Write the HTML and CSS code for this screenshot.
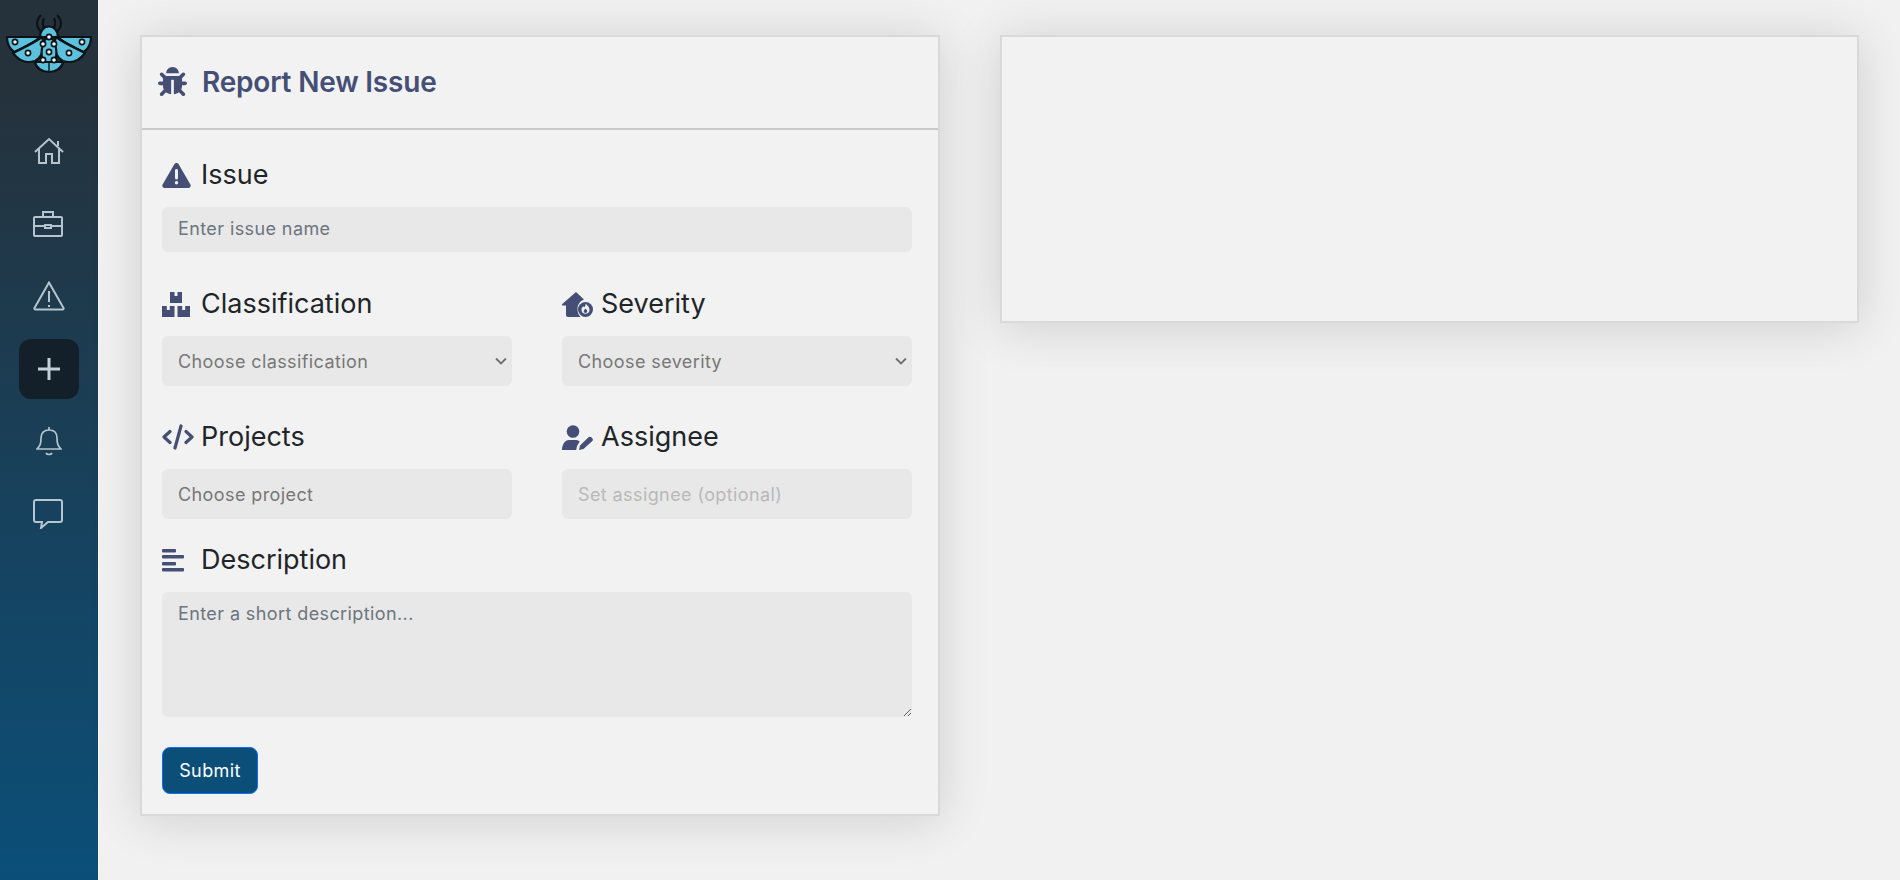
FILE: index.html
```html
<!DOCTYPE html>
<html lang="en">
<head>
    <meta charset="UTF-8">
    <meta name="viewport" content="width=device-width, initial-scale=1.0">
    <title>Report New Issue</title>
    <link rel="stylesheet" href="styles.css">
</head>
<body>
    <div class="sidebar">
        <div class="logo">
            <svg width="98" height="93" viewBox="0 0 98 93" fill="#5cc1dd" stroke="#0c1317" stroke-width="2.2" stroke-linejoin="round">
                <path d="M43 33c-8-5-7-13-2-18M55 33c8-5 7-13 2-18M46 30c-4-4-4-8-2-12M52 30c4-4 4-8 2-12" fill="none"/>
                <path d="M40 37c0-14 18-14 18 0z"/>
                <path d="M7 37h33c-6 6-16 11-26 15-4-3-7-9-7-15z"/>
                <path d="M91 37H58c6 6 16 11 26 15 4-3 7-9 7-15z"/>
                <path d="M35 62h28c-1 6-7 10-14 10s-13-4-14-10z"/>
                <path d="M13 53c10-5 21-10 29-16 3 8 1 20-7 24-9 3-17-1-22-8z"/>
                <path d="M85 53c-10-5-21-10-29-16-3 8-1 20 7 24 9 3 17-1 22-8z"/>
                <path d="M49 36c-7 4-9 16-6 26h12c3-10 1-22-6-26z"/>
                <path d="M49 62v9M16 51l24-13M82 51L58 38" fill="none" stroke-width="1.4"/>
                <g fill="#e8f4f7" stroke-width="1.6">
                    <circle cx="15" cy="42" r="2.6"/>
                    <circle cx="82" cy="42" r="2.6"/>
                    <circle cx="28" cy="53" r="2.6"/>
                    <circle cx="69" cy="53" r="2.6"/>
                    <circle cx="43" cy="44" r="2.6"/>
                    <circle cx="54" cy="44" r="2.6"/>
                    <circle cx="49" cy="37" r="2.6"/>
                    <circle cx="49" cy="52" r="2.6"/>
                    <circle cx="43" cy="60" r="2.6"/>
                    <circle cx="54" cy="60" r="2.6"/>
                </g>
            </svg>
        </div>
        <div class="nav">
            <a class="nav-item" href="#">
                <svg width="30" height="28" viewBox="0 0 30 28" class="nav-icon">
                    <path d="M1 15L15 2l14 13M5 12v14h7v-9h6v9h7V12M24 9V4"/>
                </svg>
            </a>
            <a class="nav-item" href="#">
                <svg width="30" height="26" viewBox="0 0 30 26" class="nav-icon shift-left">
                    <path d="M2 6h26a1 1 0 0 1 1 1v17a1 1 0 0 1-1 1H2a1 1 0 0 1-1-1V7a1 1 0 0 1 1-1zM10 6V1h10v5M1 15h11M18 15h11M12 14h6v3h-6z"/>
                </svg>
            </a>
            <a class="nav-item" href="#">
                <svg width="32" height="30" viewBox="0 0 32 30" class="nav-icon">
                    <path d="M16 1.500L30.500 27a1 1 0 0 1-1 1.500h-27a1 1 0 0 1-1-1.500zM16 10v11M16 24v2"/>
                </svg>
            </a>
            <a class="nav-item active" href="#">
                <svg width="24" height="24" viewBox="0 0 24 24" class="nav-icon plus">
                    <path d="M12 1v22M1 12h22"/>
                </svg>
            </a>
            <a class="nav-item" href="#">
                <svg width="26" height="30" viewBox="0 0 26 30" class="nav-icon thin">
                    <path d="M13 1v3M5 12c0-5 3-8 8-8s8 3 8 8c0 6 1 8 4 11H1c3-3 4-5 4-11zM10 27c1 2 5 2 6 0"/>
                </svg>
            </a>
            <a class="nav-item" href="#">
                <svg width="30" height="30" viewBox="0 0 30 30" class="nav-icon shift-left">
                    <path d="M3 1h24a2 2 0 0 1 2 2v18a2 2 0 0 1-2 2H15l-7 6 1-6H3a2 2 0 0 1-2-2V3a2 2 0 0 1 2-2z"/>
                </svg>
            </a>
        </div>
    </div>

    <div class="content">
        <div class="card card-form">
            <div class="card-header">
                <svg class="header-icon" width="29" height="29" viewBox="0 0 512 512">
                    <path d="M511.988 288.900c-.478 17.430-15.217 31.100-32.653 31.100H424v16c0 21.864-4.882 42.584-13.600 61.145l60.228 60.228c12.496 12.497 12.496 32.758 0 45.255-12.498 12.497-32.759 12.496-45.256 0l-54.736-54.736C345.886 467.965 314.351 480 280 480V236c0-6.627-5.373-12-12-12h-24c-6.627 0-12 5.373-12 12v244c-34.351 0-65.886-12.035-90.636-32.108l-54.736 54.736c-12.498 12.497-32.759 12.496-45.256 0-12.496-12.497-12.496-32.758 0-45.255l60.228-60.228C92.882 378.584 88 357.864 88 336v-16H32.666C15.230 320 .491 306.330.013 288.900-.484 270.816 14.028 256 32 256h56v-58.745l-46.628-46.628c-12.496-12.497-12.496-32.758 0-45.255 12.498-12.497 32.758-12.497 45.256 0L141.255 160h229.489l54.627-54.627c12.498-12.497 32.758-12.497 45.256 0 12.496 12.497 12.496 32.758 0 45.255L424 197.255V256h56c17.972 0 32.484 14.816 31.988 32.900zM257 0c-61.856 0-112 50.144-112 112h224C369 50.144 318.856 0 257 0z"/>
                </svg>
                <h3 class="card-title">Report New Issue</h3>
            </div>
            <form class="card-body">
                <div class="field">
                    <label class="field-label">
                        <span class="label-icon">
                            <svg width="29" height="25" viewBox="0 0 29 25">
                                <path fill-rule="evenodd" d="M14.500 0c1 0 1.800.6 2.300 1.400l11.600 20c.9 1.600-.2 3.600-2 3.600H2.600c-1.800 0-2.900-2-2-3.600l11.600-20C12.700.6 13.500 0 14.500 0zM13 7.500v7.500c0 .8.700 1.500 1.500 1.500s1.500-.7 1.500-1.500V7.500C16 6.700 15.300 6 14.500 6S13 6.700 13 7.500zM14.500 18a1.700 1.700 0 1 0 0 3.400 1.700 1.700 0 0 0 0-3.400z"/>
                            </svg>
                        </span>
                        Issue
                    </label>
                    <input class="control control-issue" type="text" placeholder="Enter issue name">
                </div>

                <div class="form-row row-classification">
                    <div class="field">
                        <label class="field-label">
                            <span class="label-icon">
                                <svg width="28" height="25" viewBox="0 0 28 25">
                                    <path fill-rule="evenodd" d="M8 0h4.500v4h3V0H20v11H8zM0 14h4.800v4h3v-4h4.700v11H0zM15.500 14h4.700v4h3v-4H28v11H15.500z"/>
                                </svg>
                            </span>
                            Classification
                        </label>
                        <select class="control control-select">
                            <option>Choose classification</option>
                        </select>
                    </div>
                    <div class="field">
                        <label class="field-label">
                            <span class="label-icon">
                                <svg width="31" height="25" viewBox="0 0 31 25">
                                    <path d="M14 0l8 7.500c-4 1.600-6.500 5-6.500 9.500 0 3 1 6 3 8H6c-1.100 0-2-.9-2-2v-9.500H0.800C0 13.500-.3 12.700.3 12.100z"/>
                                    <circle cx="23.500" cy="17.500" r="7.500"/>
                                    <path fill="#f2f2f2" d="M24 11.500c.5 1.800 3.500 3 3.500 6.300 0 2.400-1.800 4-4 4s-4-1.600-4-4c0-1.600.7-2.800 1.600-3.600l1.100 1.400c.8-1.200 1.500-2.600 1.800-4.100z"/>
                                    <path d="M23.500 16.500c.8.900 1.800 1.500 1.800 2.800 0 1-.8 1.700-1.800 1.700s-1.800-.7-1.800-1.700c0-1.300 1.100-1.900 1.800-2.800z"/>
                                </svg>
                            </span>
                            Severity
                        </label>
                        <select class="control control-select">
                            <option>Choose severity</option>
                        </select>
                    </div>
                </div>

                <div class="form-row row-projects">
                    <div class="field">
                        <label class="field-label">
                            <span class="label-icon">
                                <svg width="32" height="26" viewBox="0 0 32 26" fill="none" stroke-width="3.200" stroke-linecap="round" stroke-linejoin="round" class="icon-stroke">
                                    <path d="M8 7.500L2 13l6 5.500M24 7.500l6 5.500-6 5.500M19 2l-6 22"/>
                                </svg>
                            </span>
                            Projects
                        </label>
                        <input class="control control-project" type="text" value="Choose project">
                    </div>
                    <div class="field">
                        <label class="field-label">
                            <span class="label-icon">
                                <svg width="32" height="25" viewBox="0 0 32 25">
                                    <circle cx="11" cy="6.500" r="6.300"/>
                                    <path d="M7 15h6c1.700 0 3.300.5 4.700 1.400L15 21l-.8 4H0c0-5.500 3-10 7-10z"/>
                                    <path d="M17 25l1-4.500 8.500-8.200c.8-.8 2-.8 2.800 0l1 1c.8.800.8 2 0 2.800L21.500 24z"/>
                                </svg>
                            </span>
                            Assignee
                        </label>
                        <input class="control control-muted" type="text" placeholder="Set assignee (optional)">
                    </div>
                </div>

                <div class="field row-description">
                    <label class="field-label">
                        <span class="label-icon">
                            <svg width="23" height="23" viewBox="0 0 23 23">
                                <rect x="0" y="0" width="14" height="3.500" rx="1"/>
                                <rect x="0" y="6" width="22" height="3.500" rx="1"/>
                                <rect x="0" y="13" width="14" height="3.500" rx="1"/>
                                <rect x="0" y="19" width="22" height="3.500" rx="1"/>
                            </svg>
                        </span>
                        Description
                    </label>
                    <textarea class="control control-area" placeholder="Enter a short description..."></textarea>
                </div>

                <button class="submit-button" type="button">Submit</button>
            </form>
        </div>

        <div class="card card-side"></div>
    </div>
</body>
</html>
```

FILE: styles.css
```css
* {
    box-sizing: border-box;
}

html, body {
    height: 100%;
}

body {
    font-family: 'Inter', 'Liberation Sans', sans-serif;
    background-color: #f1f1f1;
    color: #212529;
    margin: 0;
    padding: 0;
    display: flex;
    overflow: hidden;
}

/* sidebar */
.sidebar {
    width: 100px;
    height: 880px;
    flex-shrink: 0;
    border-right: 2px solid #f3f3f3;
    background: linear-gradient(180deg, #25323c 0%, #25323c 10%, #0b4f79 100%);
}

.logo {
    height: 93px;
    background-color: #25323c;
}

.logo svg {
    display: block;
}

.nav {
    display: flex;
    flex-direction: column;
    align-items: center;
    gap: 12.5px;
    padding-top: 28px;
}

.nav-item {
    width: 60px;
    height: 60px;
    border-radius: 12px;
    display: flex;
    align-items: center;
    justify-content: center;
}

.nav-item.active {
    background-color: #13202a;
}

.nav-icon {
    fill: none;
    stroke: #b4c5ce;
    stroke-width: 2;
}

.nav-icon.plus {
    stroke: #c3d0d7;
    stroke-width: 3;
}

.nav-icon.thin {
    stroke-width: 1.7;
}

.shift-left {
    margin-right: 3px;
}

/* main area */
.content {
    flex: 1;
    display: flex;
    align-items: flex-start;
    gap: 60px;
    padding: 35px 41px 0 40px;
}

.card {
    background-color: #f2f2f2;
    border: 2px solid #d9d9d9;
    box-shadow: 0 4px 48px rgba(0, 0, 0, 0.14);
}

.card-form {
    width: 800px;
    height: 781px;
}

.card-side {
    flex: 1;
    height: 288px;
}

.card-header {
    height: 93px;
    border-bottom: 2px solid #c9c9c9;
    padding: 0 16px 2px;
    display: flex;
    align-items: center;
    gap: 15px;
}

.header-icon {
    fill: #454f75;
    flex-shrink: 0;
}

.card-title {
    margin: 0;
    font-size: 28px;
    font-weight: 600;
    letter-spacing: -0.2px;
    color: #454f75;
}

.card-body {
    padding: 25px 26px 0 20px;
}

.field-label {
    display: flex;
    align-items: center;
    height: 38px;
    padding-top: 2px;
    margin-bottom: 14px;
    font-size: 27px;
    line-height: 36px;
}

.label-icon {
    width: 39px;
    flex-shrink: 0;
    display: flex;
    align-items: center;
}

.label-icon svg {
    fill: #454f75;
}

.label-icon .icon-stroke {
    fill: none;
    stroke: #454f75;
}

.form-row {
    display: grid;
    grid-template-columns: 350px 350px;
    column-gap: 50px;
}

.row-classification {
    margin-top: 32px;
}

.row-projects {
    margin-top: 31px;
}

.row-description {
    margin-top: 21px;
}

.control {
    display: block;
    width: 100%;
    height: 45px;
    padding: 0 16px;
    border: none;
    border-radius: 6px;
    background-color: #e8e8e8;
    font-family: inherit;
    font-size: 18px;
    letter-spacing: 0.4px;
    color: #6c757d;
    outline: none;
}

.control::placeholder {
    color: #6c757d;
    opacity: 1;
}

.control-issue {
    padding-bottom: 3px;
}

.control-select {
    height: 50px;
    color: #777;
    appearance: none;
    background-image: url("data:image/svg+xml,%3Csvg xmlns='http://www.w3.org/2000/svg' width='12' height='8' viewBox='0 0 12 8'%3E%3Cpath d='M1 1.500l5 5 5-5' fill='none' stroke='%23707070' stroke-width='1.800'/%3E%3C/svg%3E");
    background-repeat: no-repeat;
    background-position: right 5px center;
}

.control-project {
    height: 50px;
    color: #777;
}

.control-muted {
    height: 50px;
}

.control-muted::placeholder {
    color: #b9b9b9;
}

.control-area {
    height: 125px;
    padding: 11px 16px;
    resize: vertical;
}

.submit-button {
    display: block;
    width: 96px;
    height: 47px;
    margin-top: 30px;
    background-color: #0b4f79;
    color: #fff;
    border: 1px solid #0d6efd;
    border-radius: 8px;
    font-family: inherit;
    font-size: 18px;
    letter-spacing: 0.4px;
    cursor: pointer;
}
```
